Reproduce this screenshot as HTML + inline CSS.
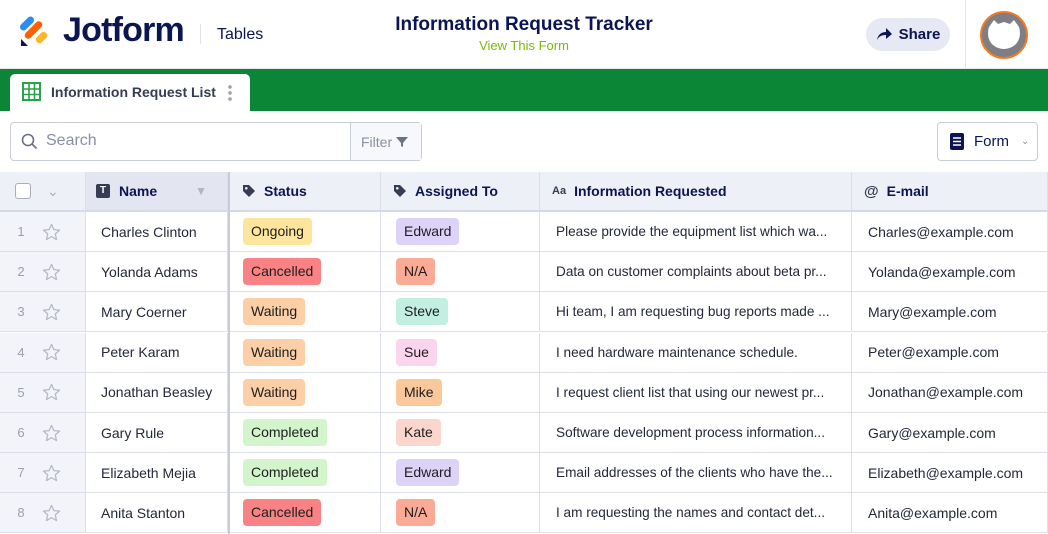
<!DOCTYPE html>
<html><head><meta charset="utf-8"><style>
*{box-sizing:border-box;margin:0;padding:0}
body{width:1048px;height:534px;overflow:hidden;background:#fff;font-family:"Liberation Sans",sans-serif;color:#0a1551;position:relative}
.abs{position:absolute}
.top{left:0;top:0;width:1048px;height:69px;background:#fff;border-bottom:1px solid #e4e6ee}
.green{left:0;top:69px;width:1048px;height:42px;background:#0b8636}
.tab{left:10px;top:74px;width:240px;height:37px;background:#fff;border-radius:5px 5px 0 0}
.cell{position:absolute;height:40px;border-bottom:1px solid #dcdfea;border-right:1px solid #dcdfea;display:flex;align-items:center;font-size:14px;color:#23283a}
.hd{background:#eef0f8;font-weight:bold;color:#0a1551;border-bottom:2px solid #d6d9e6}
.b{padding:5px 8px;border-radius:4px;font-size:14px;color:#1d1d1d;line-height:17px}
</style></head><body>
<div class="abs top"></div>
<svg class="abs" style="left:19px;top:16px" width="30" height="31" viewBox="0 0 30 31">
<rect x="4.5" y="-1" width="7" height="17" rx="3.5" fill="#2e8cf7" transform="rotate(45 8 7.5)"/>
<rect x="11" y="3" width="7" height="22" rx="3.5" fill="#ff6100" transform="rotate(45 14.5 14)"/>
<rect x="19" y="15" width="7" height="13" rx="3.5" fill="#ffb629" transform="rotate(45 22.5 21.5)"/>
<path d="M2 23 L2 30 L9 30 Z" fill="#0a1551"/>
</svg>
<div class="abs" style="left:63px;top:11px;font-size:34px;font-weight:bold;letter-spacing:-0.8px;color:#0a1551">Jotform</div>
<div class="abs" style="left:200px;top:24px;width:1px;height:20px;background:#e0e2ea"></div>
<div class="abs" style="left:217px;top:26px;font-size:16px;color:#0a1551">Tables</div>
<div class="abs" style="left:300px;top:14px;width:448px;text-align:center;font-size:19px;font-weight:bold;color:#0a1551">Information Request Tracker</div>
<div class="abs" style="left:300px;top:38px;width:448px;text-align:center;font-size:13px;color:#78bb07">View This Form</div>
<div class="abs" style="left:866px;top:18px;width:84px;height:33px;border-radius:17px;background:#e6e8f3;font-size:15px;font-weight:bold;display:flex;align-items:center;justify-content:center;gap:6px">
<svg width="17" height="13" viewBox="0 0 17 13"><path d="M1 12 C2 6 6 4 10 4 L10 0 L16 6 L10 11 L10 7 C6 7 3 8 1 12Z" fill="#0a1551"/></svg>Share</div>
<div class="abs" style="left:965px;top:0;width:1px;height:69px;background:#e4e6ee"></div>
<div class="abs" style="left:980px;top:11px;width:48px;height:48px;border-radius:50%;background:#7d7f85;border:2px solid #f47a20"></div>
<svg class="abs" style="left:985px;top:17px" width="38" height="36" viewBox="0 0 38 36"><path d="M4 10 L9 3 L13 7 L19 5 L25 7 L29 3 L34 10 C37 20 33 31 19 32 C5 31 1 20 4 10Z" fill="#fff"/></svg>
<div class="abs green"></div>
<div class="abs tab"></div>
<svg class="abs" style="left:22px;top:82px" width="19" height="19" viewBox="0 0 19 19"><rect x="1" y="1" width="17" height="17" fill="none" stroke="#2aa24b" stroke-width="2"/><path d="M1 7H18M1 12.5H18M7 1V18M12.5 1V18" stroke="#2aa24b" stroke-width="1.6"/></svg>
<div class="abs" style="left:51px;top:84px;font-size:14px;font-weight:bold;color:#343c56">Information Request List</div>
<div class="abs" style="left:228px;top:84px;width:4px;height:18px;background:radial-gradient(circle,#9aa0b0 1.6px,transparent 2px) 0 0/4px 6px"></div>
<div class="abs" style="left:10px;top:122px;width:412px;height:39px;border:1px solid #c8ccd8;border-radius:4px"></div>
<div class="abs" style="left:350px;top:123px;width:71px;height:37px;border-left:1px solid #c8ccd8;background:#f7f8fb;font-size:14px;color:#8a90a3;display:flex;align-items:center;padding-left:10px;gap:4px">Filter <svg width="12" height="12" viewBox="0 0 12 12"><path d="M0 1H12L7 7V11L5 10V7Z" fill="#6c7285"/></svg></div>
<svg class="abs" style="left:21px;top:133px" width="17" height="17" viewBox="0 0 17 17"><circle cx="7" cy="7" r="5.5" fill="none" stroke="#6c7285" stroke-width="1.6"/><path d="M11 11L15.5 15.5" stroke="#6c7285" stroke-width="1.6"/></svg>
<div class="abs" style="left:46px;top:132px;font-size:16px;color:#8a90a3">Search</div>
<div class="abs" style="left:937px;top:122px;width:101px;height:39px;border:1px solid #c8ccd8;border-radius:4px;display:flex;align-items:center;padding-left:12px;gap:10px;font-size:15px;color:#0a1551">
<svg width="14" height="17" viewBox="0 0 14 17"><rect width="14" height="17" rx="2" fill="#0a1551"/><path d="M3 5H11M3 8.5H11M3 12H11" stroke="#fff" stroke-width="1.6"/></svg>Form <span style="font-size:10px;color:#8a90a3;margin-left:2px">&#8964;</span></div>
<div id="t"></div>
<script>
let h='';
h+=`<div class="cell hd" style="left:0;top:172px;width:86px;background:#eef0f8"><span style="margin-left:15px;width:16px;height:16px;border:1.5px solid #a8adbf;border-radius:3px;background:#fff"></span><span style="margin-left:16px;color:#a8adbf;font-weight:normal">&#8964;</span></div>`;
h+=`<div class="cell hd" style="left:86px;top:172px;width:142px;background:#e3e5f0"><span style="margin-left:10px;width:14px;height:14px;background:#343c56;border-radius:2px;color:#fff;font-size:10px;text-align:center;line-height:14px">T</span><span style="margin-left:9px">Name</span><span style="margin-left:auto;margin-right:20px;color:#b0b4c4;font-size:12px">&#9660;</span></div>`;
h+=`<div class="abs" style="left:228px;top:172px;width:2px;height:362px;background:#c8ccd8"></div>`;
const tag='<svg width="14" height="14" viewBox="0 0 14 14"><path d="M1 1H7L13 7L7 13L1 7Z" fill="#343c56"/><circle cx="4.3" cy="4.3" r="1.3" fill="#eef0f8"/></svg>';
const hs=[[230,151,tag,'Status'],[381,159,tag,'Assigned To'],[540,312,'<span style="font-size:11px;color:#343c56">Aa</span>','Information Requested'],[852,196,'<span style="font-size:15px;color:#343c56">@</span>','E-mail']];
for(const [l,w,ic,t] of hs)h+=`<div class="cell hd" style="left:${l}px;top:172px;width:${w}px;padding-left:12px;gap:8px">${ic}<span>${t}</span></div>`;
const C={Ongoing:'#fde59d',Cancelled:'#f98384',Waiting:'#fccfa6',Completed:'#d2f5cc',Edward:'#ddd3f9','N/A':'#fbaa95',Steve:'#c3efe3',Sue:'#fbd5ee',Mike:'#fbc89c',Kate:'#fcd6cd'};
const R=[['Charles Clinton','Ongoing','Edward','Please provide the equipment list which wa...','Charles'],
['Yolanda Adams','Cancelled','N/A','Data on customer complaints about beta pr...','Yolanda'],
['Mary Coerner','Waiting','Steve','Hi team, I am requesting bug reports made ...','Mary'],
['Peter Karam','Waiting','Sue','I need hardware maintenance schedule.','Peter'],
['Jonathan Beasley','Waiting','Mike','I request client list that using our newest pr...','Jonathan'],
['Gary Rule','Completed','Kate','Software development process information...','Gary'],
['Elizabeth Mejia','Completed','Edward','Email addresses of the clients who have the...','Elizabeth'],
['Anita Stanton','Cancelled','N/A','I am requesting the names and contact det...','Anita']];
const star='<svg width="19" height="18" viewBox="0 0 20 19"><path d="M10 1.5L12.5 7L18.5 7.5L14 11.5L15.3 17.5L10 14.4L4.7 17.5L6 11.5L1.5 7.5L7.5 7Z" fill="none" stroke="#b4b8c8" stroke-width="1.3" stroke-linejoin="round"/></svg>';
R.forEach((r,i)=>{const y=212+i*40.2;
h+=`<div class="cell" style="left:0;top:${y}px;width:86px;background:#f3f4fa"><span style="width:42px;text-align:center;color:#9aa0b0;font-size:13px">${i+1}</span>${star}</div>`;
h+=`<div class="cell" style="left:86px;top:${y}px;width:142px;padding-left:15px">${r[0]}</div>`;
h+=`<div class="cell" style="left:230px;top:${y}px;width:151px;padding-left:13px"><span class="b" style="background:${C[r[1]]}">${r[1]}</span></div>`;
h+=`<div class="cell" style="left:381px;top:${y}px;width:159px;padding-left:15px"><span class="b" style="background:${C[r[2]]}">${r[2]}</span></div>`;
h+=`<div class="cell" style="left:540px;top:${y}px;width:312px;padding-left:16px;white-space:nowrap;font-size:13.6px">${r[3]}</div>`;
h+=`<div class="cell" style="left:852px;top:${y}px;width:196px;padding-left:16px">${r[4]}@example.com</div>`;});
document.getElementById('t').innerHTML=h;
</script>
</body></html>
